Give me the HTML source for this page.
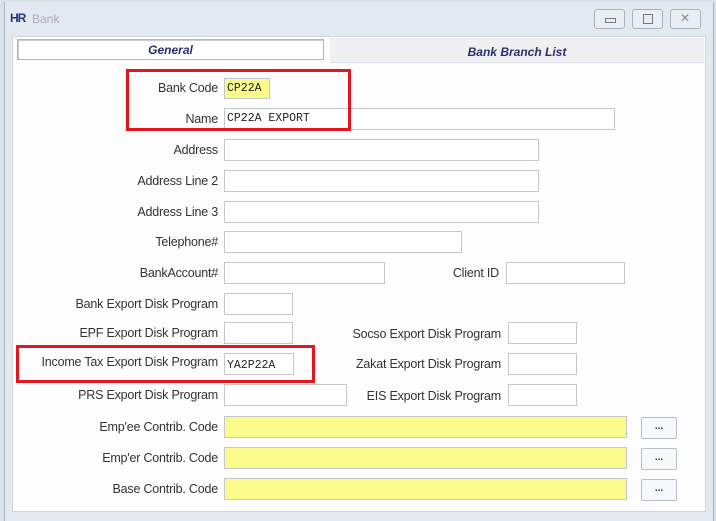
<!DOCTYPE html><html><head><style>
body{margin:0;width:716px;height:521px;overflow:hidden;background:#d9e1ea;font-family:"Liberation Sans",sans-serif;position:relative}
.a{position:absolute}
.frame{left:4px;top:2px;width:708px;height:519px;background:#e3e9f0;border-left:1px solid #aab4c0;border-right:1px solid #aab4c0}
.panel{left:12px;top:36px;width:692px;height:474px;background:#fdfdfd;border:1px solid #d0d6de}
.l{font-size:12.5px;color:#333;text-align:right;width:210px;letter-spacing:-0.2px}
.i{background:#fff;border:1px solid #c4c8cc;box-sizing:border-box;font-family:"Liberation Mono",monospace;font-size:11.5px;color:#222;padding:3px 2px;line-height:13px}
.y{background:#fbfb8c}
.b{border:1px solid #b8bfc8;border-radius:2px;background:#f7f8fa;width:34px;height:20px;font-size:10px;text-align:center;line-height:18px;font-weight:bold;color:#333}
.r{border:3px solid #e5151d;box-sizing:border-box}
.wb{top:9px;width:31px;height:20px;border:1px solid #a9b3bf;border-radius:3px;background:#e9eef3;box-sizing:border-box}
</style></head><body>
<div class="a frame"></div>
<div class="a" style="left:10px;top:11px;font-weight:bold;font-size:12px;color:#1d3a7a;letter-spacing:-1px">HR</div>
<div class="a" style="left:32px;top:12px;font-size:12px;color:#aab">Bank</div>
<div class="a wb" style="left:594px"><div class="a" style="left:10px;top:8px;width:9px;height:3px;border:1px solid #778"></div></div>
<div class="a wb" style="left:632px"><div class="a" style="left:10px;top:4px;width:8px;height:8px;border:1px solid #778"></div></div>
<div class="a wb" style="left:670px"><div class="a" style="left:9px;top:1px;font-size:12px;color:#889">✕</div></div>
<div class="a panel"></div>
<div class="a" style="left:330px;top:38px;width:374px;height:24px;background:#eef0f2;border-bottom:1px solid #dde"></div>
<div class="a" style="left:17px;top:39px;width:307px;height:21px;border:1px solid #b6b9a8;box-sizing:border-box;background:#fff;box-shadow:inset 1px 1px 0 #ccc"></div>
<div class="a" style="left:17px;top:43px;width:307px;text-align:center;font-size:12px;font-weight:bold;font-style:italic;color:#2b2f6e">General</div>
<div class="a" style="left:330px;top:45px;width:374px;text-align:center;font-size:12px;font-weight:bold;font-style:italic;color:#2b2f6e">Bank Branch List</div>

<div class="a l" style="left:8px;top:81px">Bank Code</div><div class="a i y" style="left:224px;top:78px;width:46px;height:21px">CP22A</div>
<div class="a l" style="left:8px;top:112px">Name</div><div class="a i" style="left:224px;top:108px;width:391px;height:22px">CP22A EXPORT</div>
<div class="a l" style="left:8px;top:143px">Address</div><div class="a i" style="left:224px;top:139px;width:315px;height:22px"></div>
<div class="a l" style="left:8px;top:174px">Address Line 2</div><div class="a i" style="left:224px;top:170px;width:315px;height:22px"></div>
<div class="a l" style="left:8px;top:205px">Address Line 3</div><div class="a i" style="left:224px;top:201px;width:315px;height:22px"></div>
<div class="a l" style="left:8px;top:235px">Telephone#</div><div class="a i" style="left:224px;top:231px;width:238px;height:22px"></div>
<div class="a l" style="left:8px;top:266px">BankAccount#</div><div class="a i" style="left:224px;top:262px;width:161px;height:22px"></div>
<div class="a l" style="left:289px;top:266px">Client ID</div><div class="a i" style="left:506px;top:262px;width:119px;height:22px"></div>
<div class="a l" style="left:8px;top:297px">Bank Export Disk Program</div><div class="a i" style="left:224px;top:293px;width:69px;height:22px"></div>
<div class="a l" style="left:8px;top:326px">EPF Export Disk Program</div><div class="a i" style="left:224px;top:322px;width:69px;height:22px"></div>
<div class="a l" style="left:291px;top:327px">Socso Export Disk Program</div><div class="a i" style="left:508px;top:322px;width:69px;height:22px"></div>
<div class="a l" style="left:8px;top:355px">Income Tax Export Disk Program</div><div class="a i" style="left:224px;top:353px;width:70px;height:22px;padding-top:5px">YA2P22A</div>
<div class="a l" style="left:291px;top:357px">Zakat Export Disk Program</div><div class="a i" style="left:508px;top:353px;width:69px;height:22px"></div>
<div class="a l" style="left:8px;top:388px">PRS Export Disk Program</div><div class="a i" style="left:224px;top:384px;width:123px;height:22px"></div>
<div class="a l" style="left:291px;top:389px">EIS Export Disk Program</div><div class="a i" style="left:508px;top:384px;width:69px;height:22px"></div>
<div class="a l" style="left:8px;top:420px">Emp'ee Contrib. Code</div><div class="a i y" style="left:224px;top:416px;width:403px;height:22px"></div><div class="a b" style="left:641px;top:417px">...</div>
<div class="a l" style="left:8px;top:451px">Emp'er Contrib. Code</div><div class="a i y" style="left:224px;top:447px;width:403px;height:22px"></div><div class="a b" style="left:641px;top:448px">...</div>
<div class="a l" style="left:8px;top:482px">Base Contrib. Code</div><div class="a i y" style="left:224px;top:478px;width:403px;height:22px"></div><div class="a b" style="left:641px;top:479px">...</div>

<div class="a r" style="left:126px;top:69px;width:225px;height:62px"></div>
<div class="a r" style="left:16px;top:345px;width:299px;height:38px"></div>
</body></html>
